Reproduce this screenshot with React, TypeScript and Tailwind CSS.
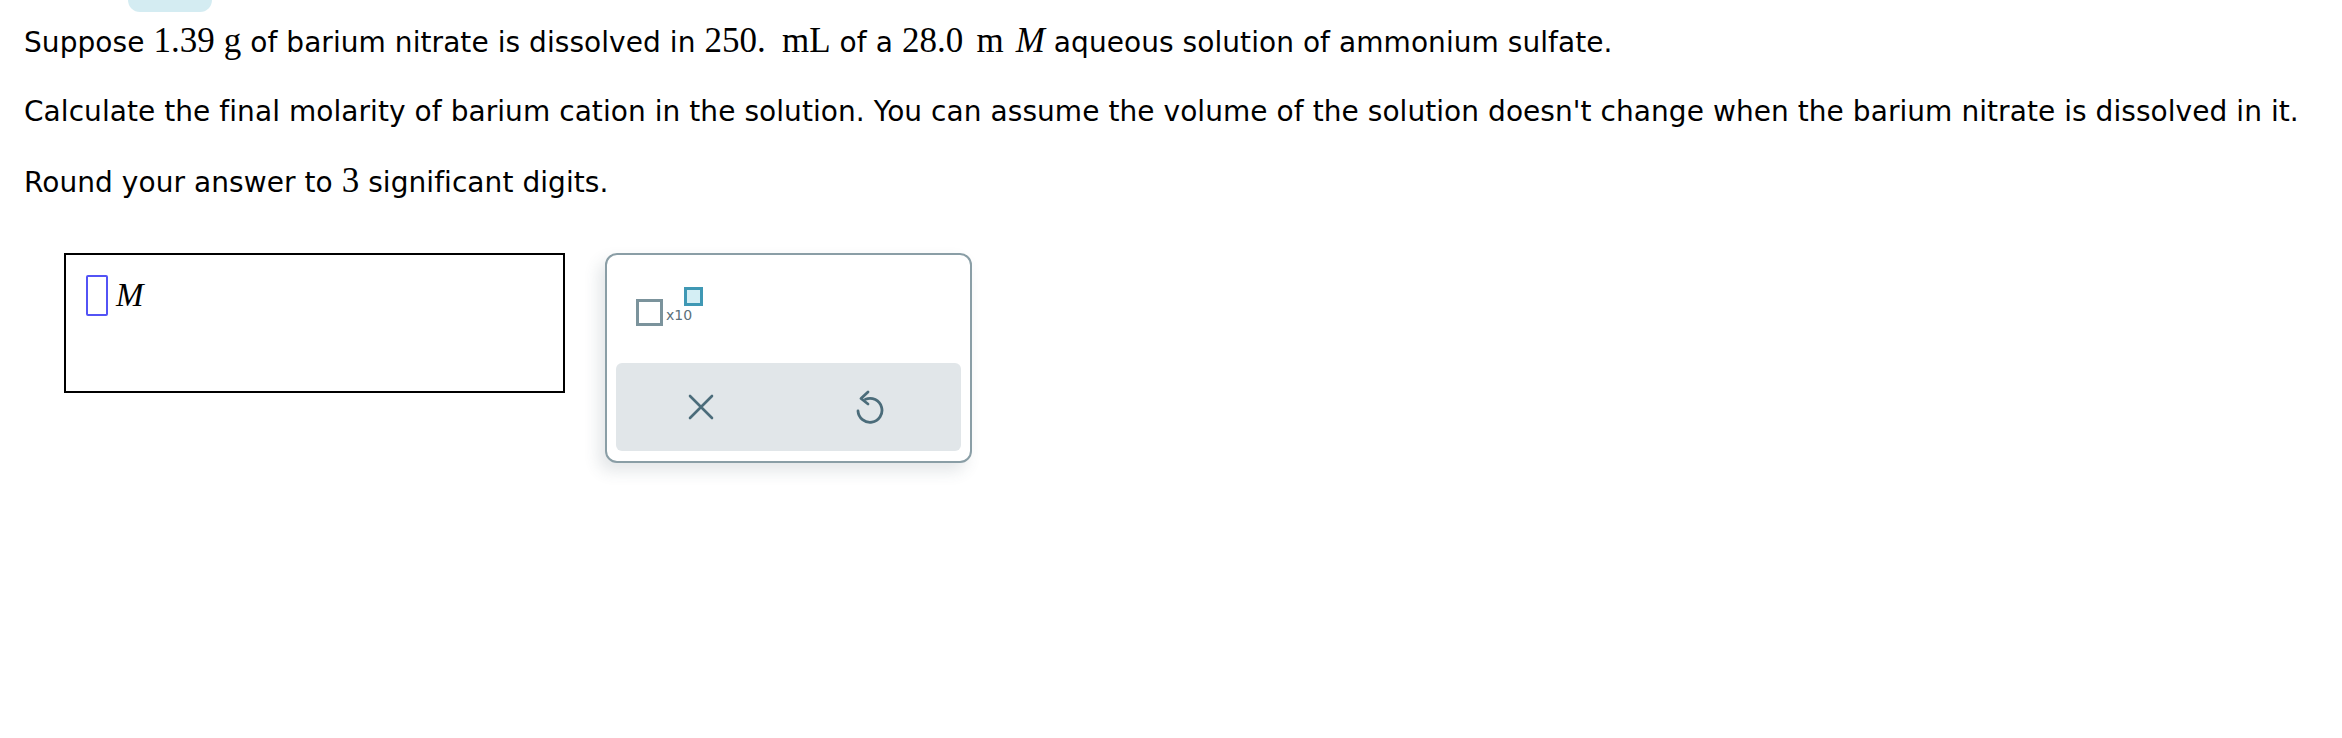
import React from 'react';

const sans = 'font-["DejaVu_Sans","Verdana",sans-serif]';
const serif = 'font-["Liberation_Serif","Times_New_Roman",serif] text-[35px]';

function Num({ children }: { children: React.ReactNode }) {
  return <span className={serif}>{children}</span>;
}

function SciIcon() {
  // the "x10 with exponent" template button
  return (
    <div className="relative w-[70px] h-[40px]">
      <div className="absolute left-0 top-[12px] w-[27px] h-[27px] border-[3px] border-[#7b939c]" />
      <span className={`absolute left-[30px] top-[21px] text-[14px] leading-none text-[#5b707a] ${sans}`}>x10</span>
      <div className="absolute left-[48px] top-0 w-[19px] h-[19px] border-[3px] border-[#3f98b4] bg-[#d4eef4]" />
    </div>
  );
}

function ClearIcon() {
  return (
    <svg width="26" height="26" viewBox="0 0 26 26" fill="none" stroke="#4b6c7a" strokeWidth="2.6" strokeLinecap="round">
      <path d="M2 2L24 24M24 2L2 24" />
    </svg>
  );
}

function UndoIcon() {
  return (
    <svg width="28" height="34" viewBox="0 0 28 34" fill="none" stroke="#4b6c7a" strokeWidth="2.8" strokeLinecap="round" strokeLinejoin="round">
      <path d="M9.5 9.2A12 12 0 1 1 2 21" />
      <path d="M12 2L5 8.5L12 14" />
    </svg>
  );
}

export default function App() {
  return (
    <div className={`w-[2342px] h-[738px] bg-white text-black text-[28px] tracking-[0.06px] ${sans}`}>
      <div className="ml-[128px] w-[84px] h-[12px] rounded-b-[12px] bg-[#d4ecf2]" />
      <div className="pl-[24px] pt-[9px]">
        <p className="leading-[40px] mb-[29px] whitespace-nowrap">
          Suppose <Num>1.39 g</Num> of barium nitrate is dissolved in{' '}
          <Num>
            250.<span className="ml-[16px]">mL</span>
          </Num>{' '}
          of a{' '}
          <Num>
            28.0<span className="ml-[13px]">m</span>
            <i className="ml-[12px]">M</i>
          </Num>{' '}
          aqueous solution of ammonium sulfate.
        </p>
        <p className="leading-[40px] mb-[29px] whitespace-nowrap">
          Calculate the final molarity of barium cation in the solution. You can assume the volume of the solution doesn't change when the barium nitrate is dissolved in it.
        </p>
        <p className="leading-[40px] whitespace-nowrap">
          Round your answer to <Num>3</Num> significant digits.
        </p>

        <div className="flex items-start gap-[40px] mt-[50px] ml-[40px]">
          <div className="w-[501px] h-[140px] border-2 border-black p-[20px]">
            <div className="flex items-center gap-[8px]">
              <div className="w-[22px] h-[41px] border-2 border-[#5353f5] rounded-[2px]" />
              <span className="font-['Liberation_Serif',serif] italic text-[33px] leading-none">M</span>
            </div>
          </div>

          <div className="w-[367px] h-[210px] border-2 border-[#8a9ea6] rounded-[12px] bg-white shadow-[-6px_8px_16px_rgba(60,80,90,0.14)] px-[9px] pb-[10px] flex flex-col">
            <div className="h-[108px] pl-[20px] pt-[32px]">
              <SciIcon />
            </div>
            <div className="flex-1 flex rounded-[6px] bg-[#e1e6e9]">
              <button className="flex-1 flex items-center justify-center">
                <ClearIcon />
              </button>
              <button className="flex-1 flex items-center justify-center pr-[6px]">
                <UndoIcon />
              </button>
            </div>
          </div>
        </div>
      </div>
    </div>
  );
}
